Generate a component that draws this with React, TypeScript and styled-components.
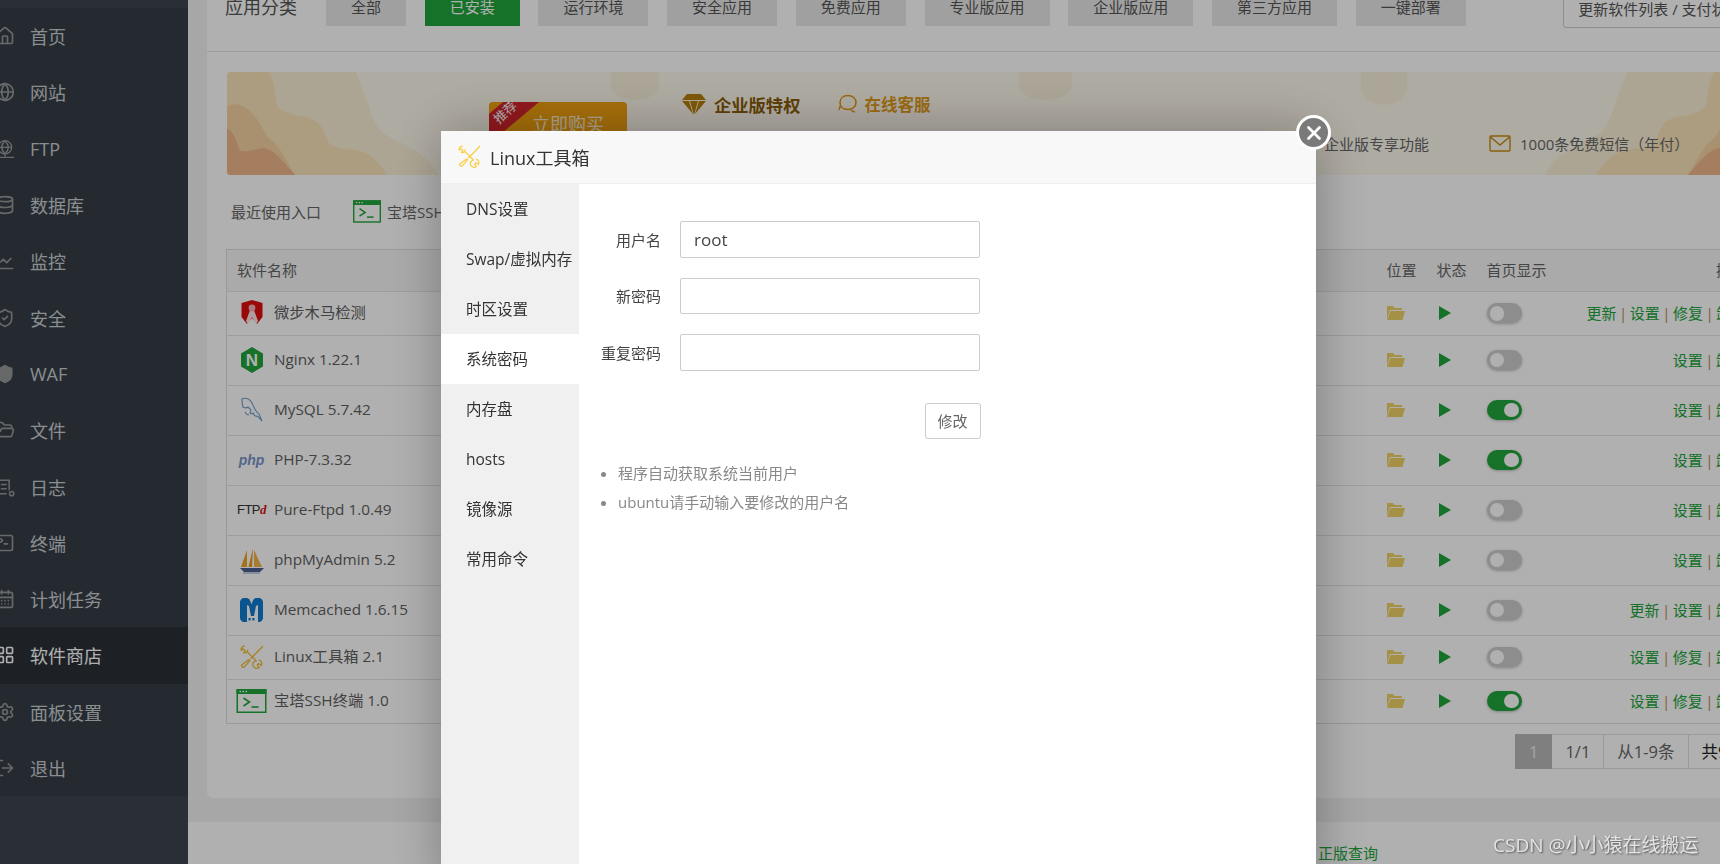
import React from "react";
import styled, { createGlobalStyle, css } from "styled-components";
import {
  House,
  Globe,
  Database,
  ChartLine,
  ShieldCheck,
  Shield,
  FolderOpen,
  SquareTerminal,
  CalendarDays,
  LayoutGrid,
  Settings,
  LogOut,
  X,
} from "lucide-react";

const GlobalStyle = createGlobalStyle`
  html, body {
    margin: 0;
    height: 100%;
    overflow: hidden;
    font-family: "Open Sans", "Noto Sans CJK SC", sans-serif;
    font-size: 15px;
    color: #666;
  }
`;

const Page = styled.div`
  display: flex;
  width: 1720px;
  height: 864px;
  overflow: hidden;
`;

/* ---------- left menu ---------- */

const Sidebar = styled.nav`
  flex: 0 0 188px;
  background: #3e4450;
  padding-top: 8px;
  overflow: hidden;
`;

const MenuList = styled.div`
  display: flex;
  flex-direction: column;
  background: #363e46;
`;

const MenuItem = styled.div<{ $active?: boolean }>`
  display: flex;
  align-items: center;
  gap: 15px;
  height: 56.3px;
  font-size: 18px;
  color: ${(p) => (p.$active ? "#ffffff" : "#c9ced2")};
  background: ${(p) => (p.$active ? "#2b3138" : "transparent")};

  & > svg {
    flex: none;
    margin-left: -5px;
    width: 20px;
    height: 20px;
    color: ${(p) => (p.$active ? "#ffffff" : "#969899")};
  }
`;

const FtpIcon = () => (
  <svg viewBox="0 0 24 24" fill="none" stroke="currentColor" strokeWidth="1.6">
    <circle cx="12" cy="10" r="8" />
    <path d="M4 10h16M12 2c-5 5-5 11 0 16M12 2c5 5 5 11 0 16M12 18v3M1 22h22" />
  </svg>
);

const LogIcon = () => (
  <svg viewBox="0 0 24 24" fill="none" stroke="currentColor" strokeWidth="1.8">
    <path d="M2 4h15v12M7 9h7M7 14h7M2 9h2M2 14h2M2 20h12" />
    <circle cx="20" cy="20" r="2.5" />
  </svg>
);

const menu: { label: string; icon: React.ReactNode; active?: boolean }[] = [
  { label: "首页", icon: <House /> },
  { label: "网站", icon: <Globe /> },
  { label: "FTP", icon: <FtpIcon /> },
  { label: "数据库", icon: <Database /> },
  { label: "监控", icon: <ChartLine /> },
  { label: "安全", icon: <ShieldCheck /> },
  { label: "WAF", icon: <Shield fill="currentColor" /> },
  { label: "文件", icon: <FolderOpen /> },
  { label: "日志", icon: <LogIcon /> },
  { label: "终端", icon: <SquareTerminal /> },
  { label: "计划任务", icon: <CalendarDays /> },
  { label: "软件商店", icon: <LayoutGrid />, active: true },
  { label: "面板设置", icon: <Settings /> },
  { label: "退出", icon: <LogOut /> },
];

/* ---------- main panel ---------- */

const Main = styled.main`
  flex: 1;
  min-width: 0;
  display: flex;
  flex-direction: column;
  background: #f2f2f2;
  overflow: hidden;
`;

const Panel = styled.section`
  flex: none;
  width: 1570px;
  height: 798px;
  box-sizing: border-box;
  margin-left: 19px;
  background: #fff;
  border-radius: 0 0 0 6px;
`;

const TabsBar = styled.div`
  display: flex;
  align-items: flex-start;
  height: 62px;
  margin-top: -10px;
  padding-left: 18px;
  border-bottom: 1px solid #e4e4e4;
  box-sizing: border-box;
`;

const TabsLabel = styled.span`
  font-size: 18px;
  line-height: 34px;
  color: #555;
  margin-right: 29px;
`;

const Tab = styled.span<{ $active?: boolean }>`
  height: 36px;
  line-height: 34px;
  padding: 0 25px;
  margin-right: 18.7px;
  color: #555;
  background: #e8e8e8;
  ${(p) =>
    p.$active &&
    css`
      background: #20a53a;
      color: #fff;
    `}
`;

const UpdateButton = styled.span`
  margin-left: 79px;
  height: 36px;
  line-height: 36px;
  padding: 0 14px;
  white-space: nowrap;
  color: #555;
  border: 1px solid #ccc;
  border-radius: 3px;
`;

/* ---------- banner ---------- */

const Banner = styled.div`
  position: relative;
  display: flex;
  width: 1529px;
  height: 103px;
  margin: 20px 0 0 20px;
  border-radius: 4px;
  background: #fdf8ec;
  overflow: hidden;
`;

const BannerWave = styled.svg<{ $right?: boolean }>`
  position: absolute;
  top: 0;
  width: 211px;
  height: 103px;
  ${(p) =>
    p.$right
      ? css`
          right: 0;
          transform: scaleX(-1);
        `
      : css`
          left: 0;
        `}
`;

const BannerBlob = styled.span<{ $left: number; $w: number; $h: number }>`
  position: absolute;
  top: 0;
  left: ${(p) => p.$left}px;
  width: ${(p) => p.$w}px;
  height: ${(p) => p.$h}px;
  border-radius: 0 0 50% 50%;
  background: #faf1dc;
`;

const BuyButton = styled.div`
  position: relative;
  flex: none;
  width: 138px;
  height: 42px;
  margin: 30px 0 0 262px;
  border-radius: 4px;
  background: #f0a00e;
  color: #fbeed2;
  font-size: 18px;
  line-height: 44px;
  padding-left: 43px;
  box-sizing: border-box;
  overflow: hidden;
`;

const Ribbon = styled.span`
  position: absolute;
  top: 0;
  left: 0;
  width: 50px;
  height: 50px;
  background: #d3252d;
  clip-path: polygon(14px 0, 50px 0, 0 42px, 0 12px);
`;

const RibbonText = styled.span`
  position: absolute;
  top: -3px;
  left: 3px;
  font-size: 13px;
  line-height: 26px;
  color: #fff;
  transform: rotate(-42deg);
  white-space: nowrap;
`;

const BannerBody = styled.div`
  position: relative;
  flex: none;
  width: 1060px;
  margin-left: 55px;
  display: flex;
  flex-direction: column;
`;

const PerkTitle = styled.div`
  display: flex;
  align-items: center;
  height: 24px;
  margin-top: 20px;
`;

const PerkName = styled.span`
  margin-left: 8px;
  font-size: 17.3px;
  font-weight: 700;
  color: #8a5c08;
`;

const Service = styled.span`
  display: flex;
  align-items: center;
  gap: 6px;
  margin-left: 38px;
  font-size: 16.5px;
  font-weight: 700;
  color: #e09a1c;
`;

const PerkRow = styled.div`
  display: flex;
  align-items: center;
  height: 24px;
  margin: 15px 0 0 642px;
  color: #666;
  white-space: nowrap;
`;

const MailIcon = styled.svg`
  width: 22px;
  height: 17px;
  margin: 0 9px 0 60px;
`;

/* ---------- recent entries ---------- */

const RecentRow = styled.div`
  display: flex;
  align-items: center;
  height: 26px;
  margin-top: 23px;
  padding-left: 24px;
  color: #666;
`;

const RecentLabel = styled.span`
  margin-right: 32px;
`;

const RecentName = styled.span`
  margin-left: 6px;
`;

/* ---------- table ---------- */

const SoftTable = styled.table`
  width: 1530px;
  margin: 25px 0 0 19px;
  table-layout: fixed;
  border-collapse: collapse;
  border: 1px solid #dedede;
`;

const HeadCell = styled.th<{ $w?: number; $right?: boolean }>`
  height: 42px;
  padding: 0 10px 2px;
  font-weight: 400;
  color: #666;
  background: #f6f6f6;
  text-align: ${(p) => (p.$right ? "right" : "left")};
  white-space: nowrap;
  overflow: hidden;
  ${(p) => p.$w && `width: ${p.$w}px;`}
  box-sizing: border-box;
`;

const Row = styled.tr<{ $h: number }>`
  height: ${(p) => p.$h}px;
  border-top: 1px solid #e4e4e4;
`;

const Cell = styled.td<{ $right?: boolean }>`
  padding: 0 10px;
  vertical-align: middle;
  text-align: ${(p) => (p.$right ? "right" : "left")};
  white-space: nowrap;
  line-height: 20px;
`;

const NameWrap = styled.div`
  display: flex;
  align-items: center;
  height: 30px;
  font-size: 15.3px;
  color: #606060;
`;

const NameText = styled.span`
  padding-bottom: 3px;
`;

const IconSlot = styled.span`
  flex: none;
  display: flex;
  align-items: center;
  justify-content: center;
  width: 42px;
  margin-left: -5px;
  padding-right: 3px;
  box-sizing: border-box;
  & svg {
    display: block;
  }
`;

const PhpMark = styled.span`
  font-family: "Liberation Sans", sans-serif;
  font-size: 14px;
  font-weight: 700;
  font-style: italic;
  color: #7a93c8;
`;

const FtpMark = styled.span`
  font-family: "Liberation Sans", sans-serif;
  font-size: 13px;
  color: #333;
  letter-spacing: -0.5px;
  & b {
    color: #d11;
    font-family: "Liberation Serif", serif;
    font-style: italic;
  }
`;

const FolderIcon = styled.svg`
  display: block;
  width: 18px;
  height: 14px;
`;

const PlayIcon = styled.svg`
  display: block;
  width: 12px;
  height: 14px;
  margin-left: 2px;
`;

const Toggle = styled.span<{ $on?: boolean }>`
  display: flex;
  align-items: center;
  justify-content: ${(p) => (p.$on ? "flex-end" : "flex-start")};
  width: 35px;
  height: 20px;
  padding: 0 3px;
  box-sizing: border-box;
  border-radius: 10px;
  background: ${(p) => (p.$on ? "#20a53a" : "#cccccc")};
  box-shadow: 0 1px 3px rgba(0, 0, 0, 0.25);

  &::after {
    content: "";
    width: 14.5px;
    height: 14.5px;
    border-radius: 50%;
    background: #fff;
  }
`;

const OpLink = styled.a`
  color: #20a53a;
`;

const OpSep = styled.span`
  color: #b58a5a;
  margin: 0 2.5px;
`;

/* ---------- pager / footer ---------- */

const Pager = styled.div`
  display: flex;
  height: 35px;
  margin: 10px 0 0 1308px;
  font-size: 16.5px;
`;

const PageBox = styled.span<{ $current?: boolean; $dark?: boolean }>`
  flex: none;
  display: flex;
  align-items: center;
  justify-content: center;
  box-sizing: border-box;
  padding: 0 13px;
  white-space: nowrap;
  color: ${(p) => (p.$current ? "#eee" : p.$dark ? "#222" : "#666")};
  background: ${(p) => (p.$current ? "#b8b8b8" : "transparent")};
  border: 1px solid ${(p) => (p.$current ? "#b8b8b8" : "#e0e0e0")};
  & + & {
    border-left: 0;
  }
`;

const Footer = styled.footer`
  flex: none;
  height: 60px;
  margin-top: 24px;
  padding: 23px 0 0 1130px;
  background: #fff;
  line-height: 16px;
  color: #20a53a;
`;

/* ---------- dialog on top ---------- */

const Shade = styled.div`
  position: fixed;
  inset: 0;
  background: rgba(0, 0, 0, 0.31);
`;

const Dialog = styled.div`
  position: fixed;
  left: 441px;
  top: 131px;
  width: 875px;
  height: 760px;
  display: flex;
  flex-direction: column;
  background: #fff;
  box-shadow: 1px 1px 50px rgba(0, 0, 0, 0.3);
`;

const DialogHead = styled.div`
  flex: none;
  display: flex;
  align-items: center;
  gap: 9px;
  height: 52.5px;
  padding-left: 17px;
  box-sizing: border-box;
  background: #f8f8f8;
  border-bottom: 1px solid #eee;
  font-size: 18px;
  color: #333;
`;

const CloseButton = styled.span`
  position: absolute;
  top: -16px;
  right: -15px;
  display: flex;
  align-items: center;
  justify-content: center;
  width: 35px;
  height: 35px;
  box-sizing: border-box;
  border: 3px solid #fff;
  border-radius: 50%;
  background: #7a7a7a;
  color: #fff;
`;

const DialogBody = styled.div`
  flex: 1;
  display: flex;
  min-height: 0;
`;

const ToolNav = styled.div`
  flex: 0 0 138px;
  background: #f0f0f0;
`;

const ToolItem = styled.div<{ $active?: boolean }>`
  height: 50px;
  line-height: 50px;
  padding-left: 25px;
  font-size: 15.5px;
  color: #333;
  white-space: nowrap;
  background: ${(p) => (p.$active ? "#fff" : "transparent")};
`;

const ToolPane = styled.div`
  flex: 1;
  padding-top: 37.5px;
`;

const FormRow = styled.label`
  display: flex;
  align-items: center;
  height: 36.5px;
  margin-bottom: 20px;
`;

const FieldName = styled.span`
  flex: none;
  width: 82px;
  text-align: right;
  color: #444;
  margin-right: 19px;
`;

const TextField = styled.input`
  width: 300px;
  height: 36.5px;
  box-sizing: border-box;
  padding: 0 13px;
  border: 1px solid #ccc;
  border-radius: 2px;
  outline: none;
  font: inherit;
  font-size: 17px;
  color: #444;
`;

const SubmitRow = styled.div`
  display: flex;
  justify-content: flex-end;
  width: 401.5px;
  margin-top: 32px;
`;

const SubmitButton = styled.button`
  width: 56px;
  height: 36.5px;
  padding: 0;
  background: #fff;
  border: 1px solid #ccc;
  border-radius: 3px;
  font: inherit;
  color: #666;
`;

const Notes = styled.ul`
  margin: 20px 0 0;
  padding: 0 0 0 39px;
  color: #888;
  & li {
    line-height: 29px;
  }
`;

const Watermark = styled.div`
  position: fixed;
  left: 1493px;
  top: 832px;
  font-size: 19px;
  line-height: 26px;
  white-space: nowrap;
  color: #e4e4e4;
  text-shadow: 1px 1px 2px rgba(0, 0, 0, 0.55);
`;

/* ---------- drawn icons ---------- */

const ToolsIcon = ({ size = 24, color = "#f7cf45" }: { size?: number; color?: string }) => (
  <svg width={size} height={size} viewBox="0 0 24 24" fill="none" stroke={color} strokeWidth="1.3" strokeLinejoin="round">
    <path d="M23 1l-12.4 12.8M9 14.6l1 1-5.8 6.4c-1 1-3.4-1.2-2.4-2.2z" />
    <path d="M5 1.2C2.6.9.7 3 1.2 5.4L3 3.8l2.2 2.2L3.6 7.8c2.2.5 4.3-1 4.2-3.3M7.6 7.2l9 9" />
    <path d="M16 15.8c-2.4.4-3.7 2.7-3 4.9 1 2.4 4 3.3 6.2 1.9l-2-2.4 1.6-1.7 2.4 2c1.3-2.2.2-5.1-2.2-5.7" />
  </svg>
);

const TerminalIcon = ({ w, h }: { w: number; h: number }) => (
  <svg width={w} height={h} viewBox="0 0 30 24" fill="none">
    <rect x="0.75" y="0.75" width="28.5" height="22.5" stroke="#20a53a" strokeWidth="1.5" fill="#fff" />
    <rect x="0" y="0" width="30" height="5" fill="#20a53a" />
    <path d="M3 2.5h1.5M6 2.5h1.5M9 2.5h1.5" stroke="#fff" strokeWidth="1.4" />
    <path d="M7 9l6 4-6 4" stroke="#20a53a" strokeWidth="1.6" />
    <path d="M15 18h7" stroke="#20a53a" strokeWidth="1.6" />
  </svg>
);

const ShieldLogo = () => (
  <svg width="22" height="26" viewBox="0 0 22 26">
    <path d="M11 0l10.5 3v14L16 24l-5-6-5 6-5.5-7V3z" fill="#e00e0e" />
    <path d="M11 5l6 16-2 3-4-7-4 7-2-3z" fill="#fff" opacity="0.9" />
    <circle cx="11" cy="8" r="3.4" fill="#f4b4b4" />
  </svg>
);

const NginxLogo = () => (
  <svg width="24" height="26" viewBox="0 0 24 26">
    <path d="M12 0l11 6.5v13L12 26 1 19.5v-13z" fill="#20a53a" />
    <text x="12" y="19" textAnchor="middle" fontFamily="Liberation Sans" fontWeight="700" fontSize="17" fill="#fff">
      N
    </text>
  </svg>
);

const DolphinLogo = () => (
  <svg width="24" height="26" viewBox="0 0 24 26" fill="none" stroke="#6f9fc9" strokeWidth="1.1">
    <path d="M2 2c4-2 8 0 10 4 2 5 4 9 7 11 1 2 2 5 3 7-2-2-3-4-5-5-2 1-3-1-4-3-1 1-2 1-3 0l1-3-3-3c-1 1-3 1-5 0-1-3-1-6-1-8z" />
    <path d="M5 15c1 2 2 3 4 3" />
  </svg>
);

const BoatLogo = () => (
  <svg width="24" height="27" viewBox="0 0 24 27">
    <path d="M7 3L1 20h6z" fill="#f0a427" />
    <path d="M13 1l-1 19H8.5z" fill="#e89a1c" />
    <path d="M14 3l8 17h-8z" fill="#f4b44a" />
    <path d="M0 21h24l-4 4H4z" fill="#4b5f8e" />
    <path d="M3 26h17" stroke="#8d9bbf" strokeWidth="1" />
  </svg>
);

const MemcachedLogo = () => (
  <svg width="23" height="24" viewBox="0 0 23 24">
    <path d="M4 0h3c2 0 3 2 4.5 6C13 2 14 0 16 0h3c2 0 4 2 4 4v16c0 2-2 4-4 4h-1V7l-2 1-2 10h-3L9 8 7 7v17H4c-2 0-4-2-4-4V4c0-2 2-4 4-4z" fill="#0f7bd0" />
    <rect x="8.5" y="20" width="2.2" height="2.4" fill="#0f7bd0" />
    <rect x="12.3" y="20" width="2.2" height="2.4" fill="#0f7bd0" />
  </svg>
);

const Folder = () => (
  <FolderIcon viewBox="0 0 18 14">
    <path d="M0 0h6l1.5 2H15v2H3L0 13z" fill="#f0d266" />
    <path d="M3.5 5H18l-2.5 9H0z" fill="#f0d266" />
  </FolderIcon>
);

const Play = () => (
  <PlayIcon viewBox="0 0 12 14">
    <path d="M0 0l12 7-12 7z" fill="#20a53a" />
  </PlayIcon>
);

/* ---------- data ---------- */

type Soft = {
  name: string;
  icon: React.ReactNode;
  on?: boolean;
  ops: string[];
  h: number;
};

const softs: Soft[] = [
  { name: "微步木马检测", icon: <ShieldLogo />, ops: ["更新", "设置", "修复", "卸载"], h: 43.5 },
  { name: "Nginx 1.22.1", icon: <NginxLogo />, ops: ["设置", "卸载"], h: 50 },
  { name: "MySQL 5.7.42", icon: <DolphinLogo />, on: true, ops: ["设置", "卸载"], h: 50 },
  { name: "PHP-7.3.32", icon: <PhpMark>php</PhpMark>, on: true, ops: ["设置", "卸载"], h: 50 },
  { name: "Pure-Ftpd 1.0.49", icon: <FtpMark>FTP<b>d</b></FtpMark>, ops: ["设置", "卸载"], h: 50 },
  { name: "phpMyAdmin 5.2", icon: <BoatLogo />, ops: ["设置", "卸载"], h: 50 },
  { name: "Memcached 1.6.15", icon: <MemcachedLogo />, ops: ["更新", "设置", "卸载"], h: 50 },
  { name: "Linux工具箱 2.1", icon: <ToolsIcon color="#efbe3a" />, ops: ["设置", "修复", "卸载"], h: 44 },
  { name: "宝塔SSH终端 1.0", icon: <TerminalIcon w={31} h={24} />, on: true, ops: ["设置", "修复", "卸载"], h: 44 },
];

const tabs = ["全部", "已安装", "运行环境", "安全应用", "免费应用", "专业版应用", "企业版应用", "第三方应用", "一键部署"];

const toolItems = ["DNS设置", "Swap/虚拟内存", "时区设置", "系统密码", "内存盘", "hosts", "镜像源", "常用命令"];

const BannerLayers = () => (
  <>
    <path d="M0 0h129c3 8 6 18 11 28 4 12 6 24 16 33 22 14 46 20 55 42H0z" fill="#fbf0d6" />
    <path d="M0 0h41c8 8 6 24 9 33 10 14 30 8 40 17 10 8 6 18 16 24 12 4 30 2 40 12 6 6 12 12 14 17H0z" fill="#f9e4ba" />
    <path d="M0 35c10-8 22 2 30 12 6 8 8 18 18 24 8 10 14 22 20 32H0z" fill="#f5d3a2" />
    <path d="M0 56c6 4 10 12 12 22 8 4 16-2 26-2 12 4 20 16 30 27H0z" fill="#efb68a" />
  </>
);

export default function App() {
  return (
    <>
      <GlobalStyle />
      <Page>
        <Sidebar>
          <MenuList>
            {menu.map((m) => (
              <MenuItem key={m.label} $active={m.active}>
                {m.icon}
                {m.label}
              </MenuItem>
            ))}
          </MenuList>
        </Sidebar>

        <Main>
          <Panel>
            <TabsBar>
              <TabsLabel>应用分类</TabsLabel>
              {tabs.map((t) => (
                <Tab key={t} $active={t === "已安装"}>
                  {t}
                </Tab>
              ))}
              <UpdateButton>更新软件列表 / 支付状态</UpdateButton>
            </TabsBar>

            <Banner>
              <BannerWave viewBox="0 0 211 103">
                <BannerLayers />
              </BannerWave>
              <BannerWave viewBox="0 0 211 103" $right>
                <BannerLayers />
              </BannerWave>
              <BannerBlob $left={384} $w={48} $h={28} />
              <BannerBlob $left={792} $w={53} $h={28} />
              <BannerBlob $left={1134} $w={46} $h={33} />
              <BuyButton>
                立即购买
                <Ribbon>
                  <RibbonText>推荐</RibbonText>
                </Ribbon>
              </BuyButton>
              <BannerBody>
                <PerkTitle>
                  <svg width="24" height="21" viewBox="0 0 24 21">
                    <path d="M5 0h14l5 6H0z" fill="#b8800c" />
                    <path d="M0 7h7l4 13zM8 7h8l-4 14zM17 7h7L13 20z" fill="#b8800c" />
                  </svg>
                  <PerkName>企业版特权</PerkName>
                  <Service>
                    <svg width="20" height="20" viewBox="0 0 20 20" fill="none" stroke="#e09a1c" strokeWidth="1.6">
                      <path d="M10 1.5c4.5 0 8 3 8 7s-3.5 7-8 7c-5 0-8-3-8-7s3-7 8-7z" />
                      <path d="M13 16c1 1 3 2 4 1.5M2 12c0 2-.5 3-1 4" />
                    </svg>
                    在线客服
                  </Service>
                </PerkTitle>
                <PerkRow>
                  企业版专享功能
                  <MailIcon viewBox="0 0 22 17" fill="none" stroke="#c48a10" strokeWidth="1.4">
                    <rect x="1" y="1" width="20" height="15" rx="1" />
                    <path d="M1.5 2L11 10l9.5-8" />
                  </MailIcon>
                  1000条免费短信（年付）
                </PerkRow>
              </BannerBody>
            </Banner>

            <RecentRow>
              <RecentLabel>最近使用入口</RecentLabel>
              <TerminalIcon w={28} h={23} />
              <RecentName>宝塔SSH终端</RecentName>
            </RecentRow>

            <SoftTable>
              <thead>
                <tr>
                  <HeadCell $w={1150}>软件名称</HeadCell>
                  <HeadCell $w={50}>位置</HeadCell>
                  <HeadCell $w={50}>状态</HeadCell>
                  <HeadCell $w={100}>首页显示</HeadCell>
                  <HeadCell $w={180} $right>
                    操作
                  </HeadCell>
                </tr>
              </thead>
              <tbody>
                {softs.map((s) => (
                  <Row key={s.name} $h={s.h}>
                    <Cell>
                      <NameWrap>
                        <IconSlot>{s.icon}</IconSlot>
                        <NameText>{s.name}</NameText>
                      </NameWrap>
                    </Cell>
                    <Cell>
                      <Folder />
                    </Cell>
                    <Cell>
                      <Play />
                    </Cell>
                    <Cell>
                      <Toggle $on={s.on} />
                    </Cell>
                    <Cell $right>
                      {s.ops.map((op, i) => (
                        <React.Fragment key={op}>
                          {i > 0 && <OpSep>|</OpSep>}
                          <OpLink>{op}</OpLink>
                        </React.Fragment>
                      ))}
                    </Cell>
                  </Row>
                ))}
              </tbody>
            </SoftTable>

            <Pager>
              <PageBox $current>1</PageBox>
              <PageBox>1/1</PageBox>
              <PageBox>从1-9条</PageBox>
              <PageBox $dark>共9条</PageBox>
            </Pager>
          </Panel>
          <Footer>正版查询</Footer>
        </Main>
      </Page>

      <Shade />

      <Dialog>
        <DialogHead>
          <ToolsIcon size={23} />
          Linux工具箱
        </DialogHead>
        <CloseButton>
          <X size={22} strokeWidth={3} />
        </CloseButton>
        <DialogBody>
          <ToolNav>
            {toolItems.map((t) => (
              <ToolItem key={t} $active={t === "系统密码"}>
                {t}
              </ToolItem>
            ))}
          </ToolNav>
          <ToolPane>
            <FormRow>
              <FieldName>用户名</FieldName>
              <TextField defaultValue="root" />
            </FormRow>
            <FormRow>
              <FieldName>新密码</FieldName>
              <TextField />
            </FormRow>
            <FormRow>
              <FieldName>重复密码</FieldName>
              <TextField />
            </FormRow>
            <SubmitRow>
              <SubmitButton>修改</SubmitButton>
            </SubmitRow>
            <Notes>
              <li>程序自动获取系统当前用户</li>
              <li>ubuntu请手动输入要修改的用户名</li>
            </Notes>
          </ToolPane>
        </DialogBody>
      </Dialog>

      <Watermark>CSDN @小小猿在线搬运</Watermark>
    </>
  );
}
